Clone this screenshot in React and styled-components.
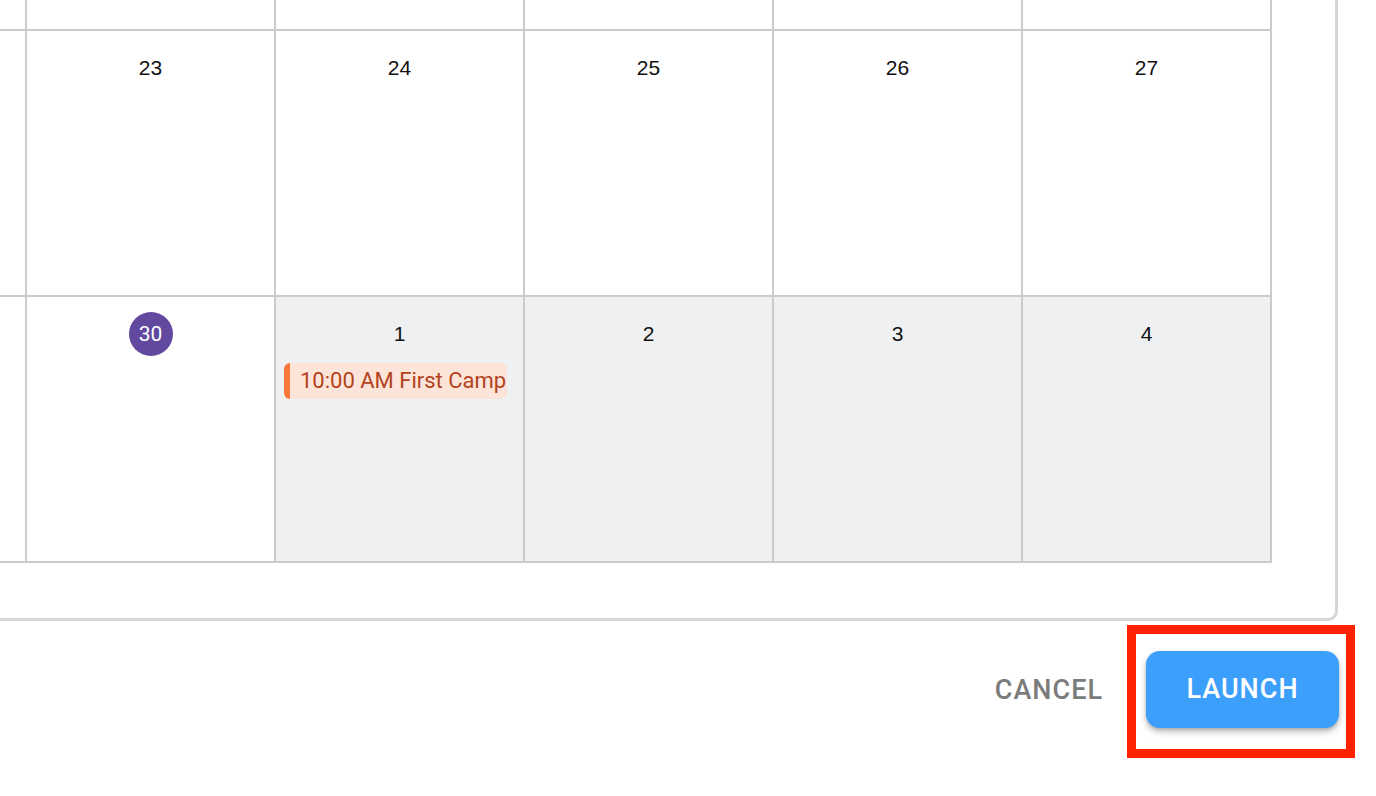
import React from "react";
import styled, { createGlobalStyle } from "styled-components";

const GlobalStyle = createGlobalStyle`
  html, body {
    margin: 0;
    padding: 0;
    background: #ffffff;
    overflow: hidden;
  }
  body {
    font-family: Roboto, "Liberation Sans", Arial, sans-serif;
  }
`;

const weeks = [
  [
    { day: "" },
    { day: "" },
    { day: "" },
    { day: "" },
    { day: "" },
    { day: "" },
  ],
  [
    { day: "" },
    { day: "23" },
    { day: "24" },
    { day: "25" },
    { day: "26" },
    { day: "27" },
  ],
  [
    { day: "" },
    { day: "30", today: true },
    { day: "1", next: true, events: [{ time: "10:00 AM", title: "First Campaign" }] },
    { day: "2", next: true },
    { day: "3", next: true },
    { day: "4", next: true },
  ],
];

const App = () => {
  return (
    <Page>
      <GlobalStyle />
      <Card>
        <Grid>
          {weeks.map((week, w) =>
            week.map((cell, idx) => (
              <Cell key={`${w}-${idx}`} $muted={cell.next}>
                {cell.day && (
                  <DayLabel>
                    {cell.today ? <Today>{cell.day}</Today> : <span>{cell.day}</span>}
                  </DayLabel>
                )}
                {cell.events &&
                  cell.events.map((ev, i) => (
                    <EventChip key={i}>
                      {ev.time} {ev.title}
                    </EventChip>
                  ))}
              </Cell>
            ))
          )}
        </Grid>
      </Card>
      <Footer>
        <CancelButton>Cancel</CancelButton>
        <Highlight>
          <LaunchButton>Launch</LaunchButton>
        </Highlight>
      </Footer>
    </Page>
  );
};

const Page = styled.div`
  margin-top: -264px;
  padding-right: 38px;
  width: 1376px;
  box-sizing: border-box;
`;

const Card = styled.div`
  margin-left: -251px;
  border: 3px solid #d6d6d6;
  border-radius: 10px;
  padding: 24px 63px 55px 24px;
  background: #fff;
`;

const Grid = styled.div`
  display: grid;
  grid-template-columns: repeat(6, 247px);
  grid-template-rows: repeat(3, 264px);
  gap: 2px;
  padding: 2px;
  background: #cbcbcb;
  width: max-content;
`;

const Cell = styled.div`
  background: ${(props) => (props.$muted ? "#eff0f2" : "#ffffff")};
  display: flex;
  flex-direction: column;
  align-items: stretch;
  padding-top: 14px;
  overflow: hidden;
`;

const DayLabel = styled.div`
  height: 44px;
  display: flex;
  align-items: center;
  justify-content: center;
  font-family: "Liberation Sans", Arial, sans-serif;
  font-size: 21px;
  color: #111;
  span {
    position: relative;
    top: 1px;
  }
`;

const Today = styled.span`
  width: 44px;
  height: 44px;
  border-radius: 50%;
  background: #62489e;
  color: #fff;
  display: flex;
  align-items: center;
  justify-content: center;
  font-family: Roboto, sans-serif;
  font-size: 21px;
`;

const EventChip = styled.div`
  margin: 8px 16px 0 8px;
  height: 36px;
  line-height: 36px;
  background: #fde4d9;
  border-left: 6px solid #fa773a;
  border-radius: 6px;
  padding-left: 10px;
  color: #b2431c;
  font-family: Roboto, sans-serif;
  font-size: 22px;
  white-space: nowrap;
  overflow: hidden;
`;

const Footer = styled.div`
  display: flex;
  justify-content: flex-end;
  align-items: center;
  margin-top: 4px;
  margin-right: -17px;
`;

const CancelButton = styled.button`
  border: none;
  background: none;
  font-family: Roboto, sans-serif;
  font-weight: 500;
  font-size: 27px;
  letter-spacing: 1px;
  text-transform: uppercase;
  color: #7b7b7b;
  padding: 0 16px 4px;
  margin-right: 8px;
  cursor: pointer;
`;

const Highlight = styled.div`
  border: 9px solid #ff2200;
  padding: 17px 7px 21px 10px;
`;

const LaunchButton = styled.button`
  display: block;
  width: 193px;
  height: 77px;
  padding: 0 0 2px;
  border: none;
  border-radius: 14px;
  background: #3d9ffc;
  color: #fff;
  font-family: Roboto, sans-serif;
  font-weight: 500;
  font-size: 27px;
  letter-spacing: 1px;
  text-transform: uppercase;
  box-shadow: 0 4px 6px rgba(0, 0, 0, 0.25), 0 1px 3px rgba(0, 0, 0, 0.15);
  cursor: pointer;
`;

export default App;
